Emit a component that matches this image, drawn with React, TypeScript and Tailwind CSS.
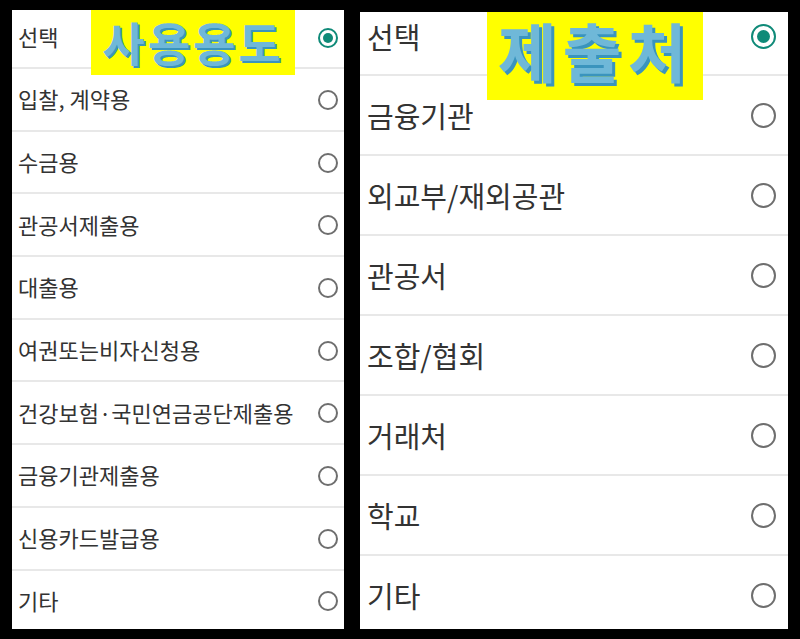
const usageItems = [
  '입찰, 계약용',
  '수금용',
  '관공서제출용',
  '대출용',
  '여권또는비자신청용',
  '건강보험·국민연금공단제출용',
  '금융기관제출용',
  '신용카드발급용',
  '기타',
];

const submitItems = ['금융기관', '외교부/재외공관', '관공서', '조합/협회', '거래처', '학교', '기타'];

function Radio({ checked, size }: { checked?: boolean; size: 'sm' | 'lg' }) {
  const box = size === 'sm' ? 'mt-[1px] h-[20px] w-[20px]' : 'h-[25px] w-[25px]';
  const dot = size === 'sm' ? 'h-[10px] w-[10px]' : 'h-[13px] w-[13px]';
  return (
    <span
      className={`flex shrink-0 items-center justify-center rounded-full border-2 ${box} ${
        checked ? 'border-[#0f8a78]' : 'border-[#6e6e6e]'
      }`}
    >
      {checked && <span className={`rounded-full bg-[#0f8a78] ${dot}`} />}
    </span>
  );
}

function Row({ label, checked, size, rowClass }: { label: string; checked?: boolean; size: 'sm' | 'lg'; rowClass: string }) {
  return (
    <div className={`flex shrink-0 items-center justify-between border-[#e8e8e8] ${rowClass}`}>
      <span className={`whitespace-nowrap ${size === 'sm' ? 'pb-[2px]' : ''}`}>{label}</span>
      <Radio checked={checked} size={size} />
    </div>
  );
}

export default function App() {
  return (
    <div
      className="flex h-[639px] w-[800px] items-end bg-black pb-[10px] pl-[12px] text-[#333333]"
      style={{ fontFamily: '"Noto Sans CJK KR", "Noto Sans", sans-serif' }}
    >
      {/* 사용용도 */}
      <div className="relative flex h-[619px] w-[332px] flex-col bg-white text-[22px] leading-none">
        <Row label="선택" checked size="sm" rowClass="h-[59px] border-b-2 pl-[6px] pr-[6px] pb-[3px]" />
        {usageItems.map((item, i) => (
          <Row
            key={item}
            label={item}
            size="sm"
            rowClass={i === usageItems.length - 1 ? 'h-[58.4px] pl-[6px] pr-[6px] pt-[2px]' : 'h-[62.7px] border-b-2 pl-[6px] pr-[6px]'}
          />
        ))}
        <div className="absolute left-[79px] top-0 flex h-[65px] w-[204px] items-center justify-center bg-[#ffff00] pb-[3px] text-[46px] font-bold tracking-[3px] text-[#6fb8d8] [text-shadow:2px_2px_0_#3a94bd]">
          사용용도
        </div>
      </div>

      {/* 제출처 */}
      <div className="relative ml-[16px] flex h-[617px] w-[428px] flex-col bg-white text-[29px] leading-none">
        <Row label="선택" checked size="lg" rowClass="h-[64px] border-b-2 pl-[7px] pr-[12px] pb-[14px]" />
        {submitItems.map((item, i) => (
          <Row
            key={item}
            label={item}
            size="lg"
            rowClass={i === submitItems.length - 1 ? 'h-[73px] pl-[7px] pr-[12px] pt-[5px]' : 'h-[80px] border-b-2 pl-[7px] pr-[12px]'}
          />
        ))}
        <div className="absolute left-[127px] top-0 flex h-[88px] w-[216px] items-center justify-center bg-[#ffff00] pb-[14px] text-[64px] font-bold tracking-[6px] text-[#6fb8d8] [text-shadow:3px_3px_0_#3a94bd]">
          제출처
        </div>
      </div>
    </div>
  );
}
